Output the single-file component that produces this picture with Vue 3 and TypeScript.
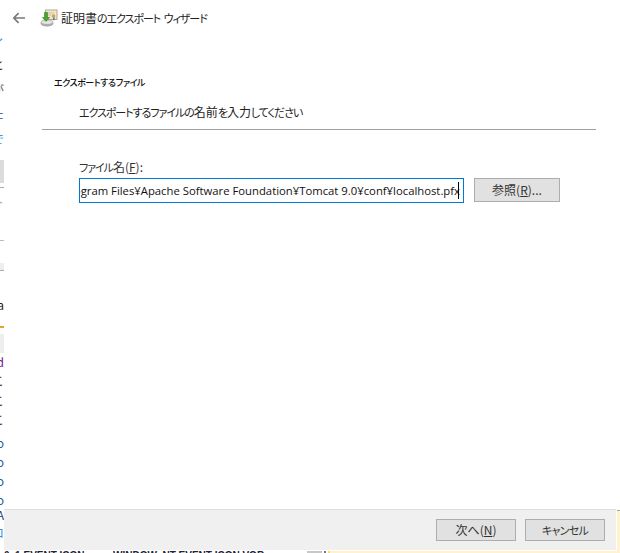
<script setup lang="ts">
const sideMarks = [
  { t: 'イ', top: 38, color: '#2f8fe0' },
  { t: 'と', top: 60, color: '#333' },
  { t: 'が', top: 85, color: '#555' },
  { t: 'た', top: 109, color: '#5a6aa8' },
  { t: 'で', top: 134, color: '#3a90d0' },
  { t: 'ト', top: 197, color: '#c79ab8' },
  { t: 'a', top: 300, color: '#222' },
  { t: 'd', top: 357, color: '#6a1a8a' },
  { t: 'こ', top: 376, color: '#222' },
  { t: 'こ', top: 396, color: '#222' },
  { t: 'こ', top: 415, color: '#222' },
  { t: 'o', top: 438, color: '#1f5f9f' },
  { t: 'o', top: 457, color: '#1f5f9f' },
  { t: 'o', top: 476, color: '#1f5f9f' },
  { t: 'o', top: 495, color: '#1f5f9f' },
  { t: 'A', top: 510, color: '#1f3f7f' },
  { t: 'ロ', top: 528, color: '#2f8fe0' },
]
const sideBoxes = [
  { top: 160, height: 23, color: '#dcdcdc' },
  { top: 187, height: 1, color: '#aaaaaa' },
  { top: 240, height: 1, color: '#bbbbbb' },
  { top: 263, height: 7, color: '#eeeeee' },
  { top: 270, height: 1, color: '#aaaaaa' },
  { top: 326, height: 2, color: '#e8a030' },
  { top: 334, height: 19, color: '#eeeeee' },
]
</script>

<template>
  <div class="page">
    <div class="side">
      <span
        v-for="(m, i) in sideMarks"
        :key="i"
        class="side-mark"
        :style="{ top: m.top + 'px', color: m.color }"
      >{{ m.t }}</span>
      <span
        v-for="(b, i) in sideBoxes"
        :key="'b' + i"
        class="side-box"
        :style="{ top: b.top + 'px', height: b.height + 'px', background: b.color }"
      ></span>
    </div>

    <div class="window">
      <header class="titlebar">
        <svg class="back" width="14" height="12" viewBox="0 0 14 12">
          <path d="M13 6H2.2M6.6 1.2 1.8 6l4.8 4.8" fill="none" stroke="#7a7a7a" stroke-width="1.7" />
        </svg>
        <svg class="wizard-icon" width="18" height="18" viewBox="0 0 18 18">
          <rect x="5.5" y="1" width="11.5" height="9.5" fill="#efe6cf" stroke="#b5a98a" stroke-width="1" />
          <path d="M8 4h6M8 6h3" stroke="#c9bfa5" stroke-width="1" />
          <circle cx="13.5" cy="7" r="1.8" fill="#e8a020" />
          <path d="M13 8.5v3l.8-.7.8.7v-3z" fill="#3f78c8" />
          <ellipse cx="7" cy="14.5" rx="6" ry="2.6" fill="#b9b9b9" stroke="#8a8a8a" stroke-width=".7" />
          <ellipse cx="7" cy="13.2" rx="6" ry="2.3" fill="#e4e4e4" stroke="#9a9a9a" stroke-width=".7" />
          <path d="M7.5 3.5v5h2L6 12.4 2.5 8.5h2v-5z" fill="#4aa52e" stroke="#2f7d1c" stroke-width=".6" />
        </svg>
        <span class="title">証明書<span class="kana spaced">のエクスポート ウィザード</span></span>
      </header>

      <section class="intro">
        <h1 class="heading">エクスポートするファイル</h1>
        <p class="subheading"><span class="kana">エクスポートするファイルの</span>名前<span class="kana">を</span>入力<span class="kana">してください</span></p>
      </section>
      <div class="rule"></div>

      <main class="content">
        <label class="field-label"><span class="kana">ファイル</span>名(<u>F</u>):</label>
        <div class="field-row">
          <div class="input">
            <span class="input-text">C:¥Program Files¥Apache Software Foundation¥Tomcat 9.0¥conf¥localhost.pfx</span>
            <span class="caret"></span>
          </div>
          <button class="btn browse" type="button">参照(<u>R</u>)...</button>
        </div>
      </main>

      <footer class="footer">
        <button class="btn action" type="button">次へ(<u>N</u>)</button>
        <button class="btn action" type="button"><span class="kana-soft">キャンセル</span></button>
      </footer>
    </div>

    <div class="right-strip"></div>

    <div class="bottom-strip">
      <span class="bottom-text first">0x1 EVENT ICON</span>
      <span class="bottom-text second">WINDOW_NT EVENT ICON VOR</span>
      <span class="gray-a"></span>
      <span class="gray-b"></span>
      <span class="yellow-a"></span>
      <span class="yellow-b"></span>
    </div>
  </div>
</template>

<style>
html,
body {
  margin: 0;
  background: #fff;
}
</style>

<style scoped>
.page {
  position: relative;
  width: 620px;
  height: 553px;
  overflow: hidden;
  background: #fff;
  font-family: "Open Sans", "Noto Sans CJK JP", sans-serif;
  color: #1a1a1a;
}
.side {
  position: absolute;
  left: 0;
  top: 0;
  width: 4px;
  height: 553px;
  overflow: hidden;
}
.side-mark {
  position: absolute;
  right: 0;
  font: 12px/10px "Noto Sans CJK JP", sans-serif;
  white-space: nowrap;
}
.side-box {
  position: absolute;
  left: 0;
  width: 4px;
}
.window {
  position: absolute;
  left: 4px;
  top: 0;
  width: 612px;
  height: 550px;
  display: flex;
  flex-direction: column;
  background: #fff;
}
.titlebar {
  display: flex;
  align-items: center;
  height: 36px;
  flex: none;
}
.back {
  margin-left: 8px;
  flex: none;
}
.wizard-icon {
  margin-left: 14px;
  margin-top: -1px;
  flex: none;
}
.title {
  margin-left: 3px;
  font: 12px/16px "Noto Sans CJK JP", sans-serif;
  font-feature-settings: "palt";
  color: #222;
  white-space: pre;
}
.kana {
  font-size: 11px;
  letter-spacing: -1.05px;
}
.spaced {
  word-spacing: 2px;
}
.kana-soft {
  font-size: 11px;
  letter-spacing: -0.7px;
}
.intro {
  flex: none;
  height: 93px;
}
.heading {
  margin: 40px 0 0 50px;
  font: 500 9px/14px "Noto Sans CJK JP", sans-serif;
  font-feature-settings: "palt";
  letter-spacing: -0.45px;
  color: #111;
}
.subheading {
  margin: 13px 0 0 75px;
  font: 12px/18px "Noto Sans CJK JP", sans-serif;
  font-feature-settings: "palt";
  color: #222;
}
.rule {
  flex: none;
  height: 1px;
  margin: 0 20px 0 38px;
  background: #a0a0a0;
}
.content {
  flex: 1;
  padding: 29px 0 0 75px;
}
.field-label {
  display: block;
  font: 12px/16px "Noto Sans CJK JP", "Open Sans", sans-serif;
  font-feature-settings: "palt";
  color: #333;
  margin-bottom: 3px;
}
.field-row {
  display: flex;
  align-items: flex-start;
  gap: 10px;
}
.input {
  position: relative;
  box-sizing: border-box;
  width: 385px;
  height: 25px;
  border: 1.5px solid #0078d7;
  display: flex;
  justify-content: flex-end;
  align-items: center;
  overflow: hidden;
  padding-right: 3px;
}
.input-text {
  flex: none;
  white-space: nowrap;
  font: 11.3px/20px "Open Sans", "Noto Sans CJK JP", sans-serif;
  color: #111;
}
.caret {
  position: absolute;
  right: 4px;
  top: 3px;
  width: 1px;
  height: 17px;
  background: #000;
}
.btn {
  box-sizing: border-box;
  border: 1px solid #adadad;
  background: #e1e1e1;
  padding: 0;
  margin: 0;
  font: 12px/16px "Noto Sans CJK JP", "Open Sans", sans-serif;
  font-feature-settings: "palt";
  color: #333;
}
.browse {
  width: 86px;
  height: 24px;
}
.footer {
  flex: none;
  box-sizing: border-box;
  height: 41px;
  border-top: 1px solid #dfdfdf;
  background: #f0f0f0;
  display: flex;
  justify-content: flex-end;
  align-items: flex-start;
  gap: 9px;
  padding: 9px 11px 0 0;
}
.action {
  width: 80px;
  height: 22px;
}
.right-strip {
  position: absolute;
  left: 617px;
  top: 510px;
  width: 3px;
  height: 43px;
  background: #fff2cc;
  border-top: 1px solid #a6a6a6;
  box-sizing: border-box;
}
.bottom-strip {
  position: absolute;
  left: 0;
  top: 551px;
  width: 620px;
  height: 2px;
  overflow: hidden;
  display: flex;
  align-items: flex-start;
}
.bottom-text {
  flex: none;
  overflow: hidden;
  white-space: nowrap;
  font: 700 10px/10px "Liberation Sans", sans-serif;
  color: #223;
}
.first {
  width: 90px;
  margin-left: 4px;
}
.second {
  width: 180px;
  margin-left: 19px;
}
.gray-a {
  flex: none;
  width: 15px;
  height: 2px;
  margin-left: 14px;
  background: #c8c8c8;
}
.gray-b {
  flex: none;
  width: 2px;
  height: 2px;
  margin-left: 2px;
  background: #777;
}
.yellow-a {
  flex: none;
  width: 2px;
  height: 2px;
  margin-left: 2px;
  background: #ffd966;
}
.yellow-b {
  flex: 1;
  height: 2px;
  background: #fff2cc;
}
</style>
